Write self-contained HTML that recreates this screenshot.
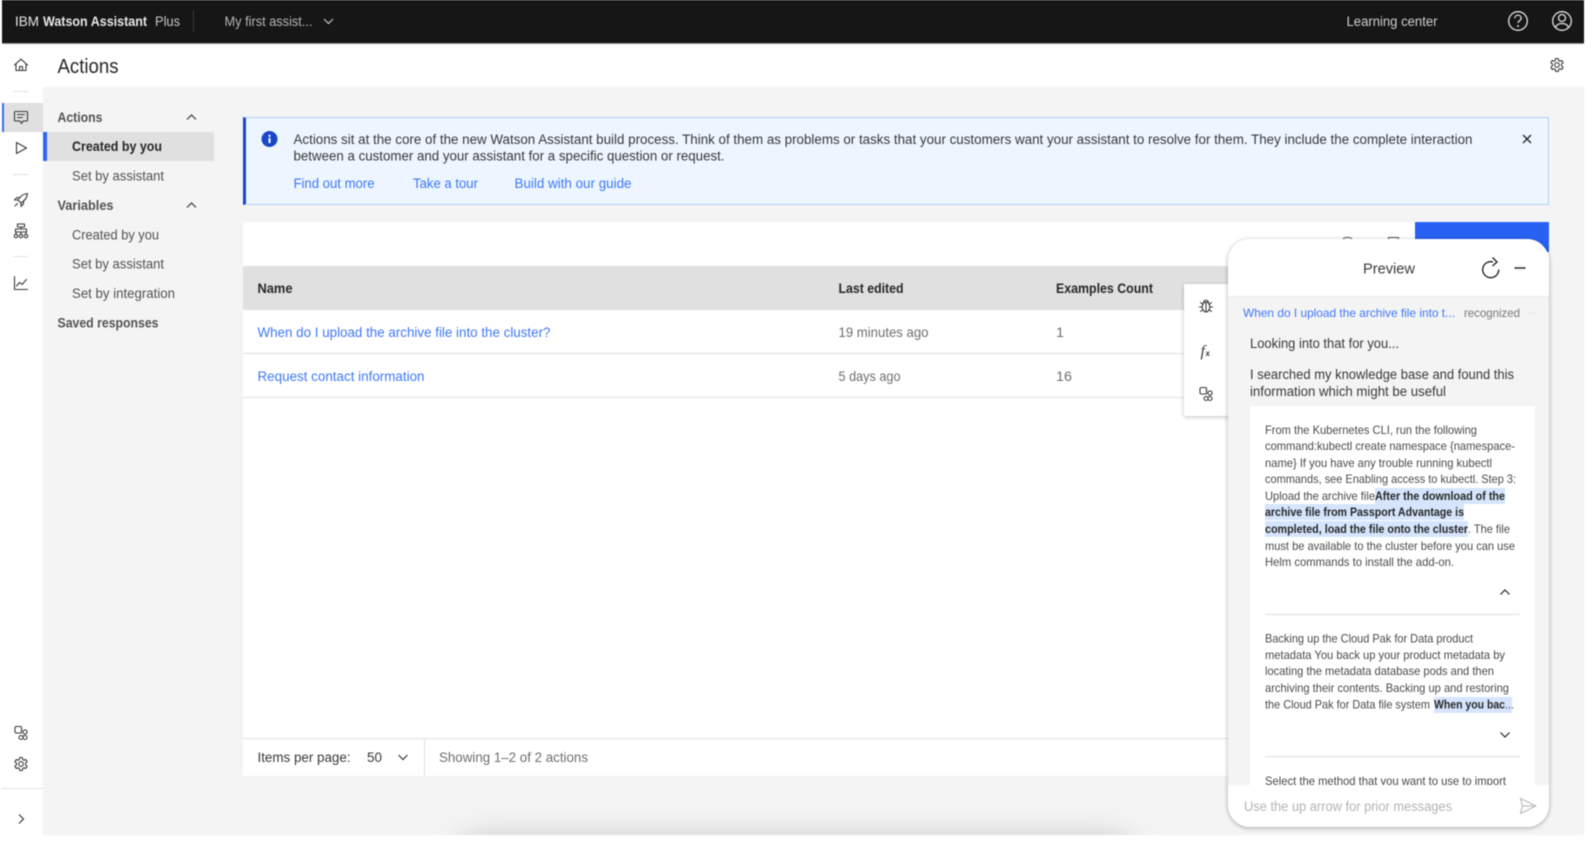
<!DOCTYPE html>
<html><head><meta charset="utf-8"><title>Actions</title>
<style>
html,body{margin:0;padding:0;background:#fff;width:1594px;height:842px;overflow:hidden}
.b{position:absolute}
#wrap{position:absolute;left:0;top:0;width:1594px;height:842px;overflow:hidden;filter:blur(.4px)}
svg text{font-family:"Liberation Sans",Arial,sans-serif;font-size:13.5px;fill:#525252;white-space:pre}
.w{fill:#e8e8e8}.g{fill:#bdbdbd}
.d{fill:#393939}.h{font-weight:700;fill:#393939}
.k{font-weight:700;fill:#262626}
.l{fill:#3f78f6}
.c{font-size:12px;fill:#4a4a4a}
.cb{font-size:12px;font-weight:700;fill:#262626}
.i{fill:none;stroke:#393939;stroke-width:1.1;stroke-linejoin:round;stroke-linecap:round}
</style></head><body>
<div id="wrap">
<div class="b" style="left:2px;top:0;width:1582px;height:44px;background:#161616;border-bottom:1px solid #8d8d8d;box-sizing:border-box"></div>
<div class="b" style="left:193px;top:10px;width:1px;height:22px;background:#393939"></div>
<div class="b" style="left:2px;top:44px;width:1582px;height:43px;background:#fff"></div>
<div class="b" style="left:43px;top:87px;width:1541px;height:748px;background:#f4f4f4;overflow:hidden">
  <div class="b" style="left:415px;top:750px;width:675px;height:40px;background:rgba(0,0,0,.18);border-radius:20px;filter:blur(15px)"></div>
</div>
<!-- rail -->
<div class="b" style="left:13px;top:91px;width:15px;height:1px;background:#e0e0e0"></div>
<div class="b" style="left:2px;top:103px;width:41px;height:29px;background:#e0e0e0"></div>
<div class="b" style="left:2px;top:103px;width:2px;height:29px;background:#3b6ff0"></div>
<div class="b" style="left:13px;top:174px;width:15px;height:1px;background:#e0e0e0"></div>
<div class="b" style="left:13px;top:256px;width:15px;height:1px;background:#e0e0e0"></div>
<div class="b" style="left:2px;top:788px;width:41px;height:1px;background:#e0e0e0"></div>
<!-- side nav -->
<div class="b" style="left:43px;top:132px;width:171px;height:29px;background:#e0e0e0"></div>
<div class="b" style="left:43px;top:132px;width:4px;height:29px;background:#2f66f2"></div>
<!-- banner -->
<div class="b" style="left:243px;top:117px;width:1306px;height:88px;background:#edf5ff;border:1px solid #b6cdf6;border-left:3px solid #1a47c8;box-sizing:border-box"></div>
<!-- table -->
<div class="b" style="left:243px;top:222px;width:1306px;height:554px;background:#fff"></div>
<div class="b" style="left:1415px;top:222px;width:134px;height:30px;background:#2962f2"></div>
<div class="b" style="left:1342px;top:237px;width:11px;height:8px;border:1px solid #555;border-radius:6px;box-sizing:border-box"></div>
<div class="b" style="left:1388px;top:237px;width:11px;height:8px;border:1px solid #555;box-sizing:border-box"></div>
<div class="b" style="left:243px;top:266px;width:1306px;height:44px;background:#e0e0e0"></div>
<div class="b" style="left:243px;top:353px;width:1000px;height:1px;background:#e0e0e0"></div>
<div class="b" style="left:243px;top:397px;width:1000px;height:1px;background:#e0e0e0"></div>
<div class="b" style="left:243px;top:738px;width:1000px;height:1px;background:#e0e0e0"></div>
<div class="b" style="left:424px;top:738px;width:1px;height:38px;background:#e0e0e0"></div>
<!-- float tools -->
<div class="b" style="left:1184px;top:284px;width:48px;height:132px;background:#fff;box-shadow:0 1px 4px rgba(0,0,0,.25)"></div>
<!-- preview -->
<div class="b" style="left:1228px;top:239px;width:321px;height:588px;background:#f4f4f4;border-radius:22px;box-shadow:0 1px 5px rgba(0,0,0,.32);overflow:hidden">
  <div class="b" style="left:0;top:0;width:321px;height:58px;background:#fff;border-bottom:1px solid #e8e8e8;box-sizing:border-box"></div>
  <div class="b" style="left:22px;top:167px;width:285px;height:379px;background:#fff"></div>
  <div class="b" style="left:0;top:546px;width:321px;height:42px;background:#fff"></div>
  <div class="b" style="left:37px;top:375px;width:255px;height:1px;background:#e0e0e0"></div>
  <div class="b" style="left:37px;top:517px;width:255px;height:1px;background:#e0e0e0"></div>
  <div class="b" style="left:147px;top:249px;width:130px;height:16px;background:#d6e5fd"></div>
  <div class="b" style="left:37px;top:265px;width:199px;height:16px;background:#d6e5fd"></div>
  <div class="b" style="left:37px;top:282px;width:203px;height:16px;background:#d6e5fd"></div>
  <div class="b" style="left:206px;top:458px;width:78px;height:16px;background:#d6e5fd"></div>
</div>

<svg class="b" style="left:0;top:0" width="1594" height="842" viewBox="0 0 1594 842" xmlns="http://www.w3.org/2000/svg">
<defs>
<clipPath id="cp"><rect x="1228" y="700" width="321" height="85"/></clipPath>
<g id="gear"><path d="M6.7 1.5h2.6l.4 2 1.2.7 1.9-.7 1.3 2.2-1.5 1.3v2l1.500 1.3-1.3 2.2-1.9-.7-1.2.7-.4 2H6.7l-.4-2-1.2-.7-1.9.7-1.3-2.2 1.5-1.3V7L1.9 5.7l1.3-2.2 1.9.7 1.2-.7z"/><circle cx="8" cy="8" r="2.3"/></g>
<g id="apps"><rect x="2" y="1.5" width="6.5" height="6.5" rx="1.2"/><circle cx="12" cy="7" r="2.1"/><circle cx="8" cy="12.5" r="2"/><circle cx="12" cy="12.5" r="2"/></g>
</defs>

<!-- topbar text -->
<text x="15" y="26" textLength="24" lengthAdjust="spacingAndGlyphs" class="w">IBM</text>
<text x="43" y="26" textLength="104" lengthAdjust="spacingAndGlyphs" class="w" style="font-weight:700">Watson Assistant</text>
<text x="155" y="26" textLength="25" lengthAdjust="spacingAndGlyphs" style="fill:#c6c6c6">Plus</text>
<text x="224.500" y="26" textLength="88" lengthAdjust="spacingAndGlyphs" style="fill:#b5b5b5">My first assist...</text>
<path d="M324 19l4.500 4.500 4.500-4.500" fill="none" stroke="#c6c6c6" stroke-width="1.200"/>
<text x="1346.500" y="26" textLength="91" lengthAdjust="spacingAndGlyphs" style="fill:#cfcfcf">Learning center</text>
<circle cx="1518" cy="21" r="9.300" fill="none" stroke="#e0e0e0" stroke-width="1.300"/>
<path d="M1514.800 18.300c0-4.200 6.400-4.200 6.400 0 0 2.400-3.200 2.200-3.200 4.700" fill="none" stroke="#e0e0e0" stroke-width="1.300"/><circle cx="1518" cy="26" r="1" fill="#e0e0e0"/>
<circle cx="1562" cy="21" r="9.300" fill="none" stroke="#e0e0e0" stroke-width="1.300"/>
<circle cx="1562" cy="18" r="3.500" fill="none" stroke="#e0e0e0" stroke-width="1.300"/>
<path d="M1555.500 27.500c1-3 3.500-4 6.500-4s5.500 1 6.500 4" fill="none" stroke="#e0e0e0" stroke-width="1.300"/>

<!-- title -->
<text x="57.500" y="73" textLength="61" lengthAdjust="spacingAndGlyphs" style="font-size:20px;fill:#262626">Actions</text>
<use href="#gear" x="1549" y="57" class="i"/>

<!-- rail icons -->
<g transform="translate(13,57)" class="i"><path d="M1.500 8L8 2.200 14.500 8M3 7v6.500h10V7M6.500 13.500v-4h3v4"/></g>
<g transform="translate(13,109)" class="i"><path d="M2.500 2.500h11a1 1 0 0 1 1 1v7.500a1 1 0 0 1-1 1H10l-1.500 2.500L7 12H2.500a1 1 0 0 1-1-1V3.500a1 1 0 0 1 1-1zM4.500 5.500h7M4.500 8.500h5"/></g>
<g transform="translate(13,140)" class="i"><path d="M3.500 2.500v11l10-5.500z"/></g>
<g transform="translate(13,192)" class="i"><path d="M14.500 1.500C10.500 2 7 4.500 5 8l3 3c3.500-2 6-5.500 6.500-9.500zM5 8H1.500l2.500-2.500h3.500M8 11v3.500l2.500-2.500V8.500M2 14l2.500-2.500"/></g>
<g transform="translate(13,223)" class="i"><rect x="4.500" y="1" width="7" height="3"/><rect x="2.500" y="6" width="11" height="3"/><path d="M8 4v2M3 9v2M8 9v2M13 9v2"/><circle cx="3" cy="13" r="1.700"/><circle cx="8" cy="13" r="1.700"/><circle cx="13" cy="13" r="1.700"/></g>
<g transform="translate(13,275)" class="i"><path d="M1.500 1.500v13h13M3.500 11l3-3.500 2.500 2 4.500-5"/></g>
<use href="#apps" x="13" y="725" class="i"/>
<use href="#gear" x="13" y="756" class="i"/>
<path d="M19 814.500l4.500 4.500-4.500 4.500" fill="none" stroke="#393939" stroke-width="1.200"/>

<!-- side nav -->
<text x="57.500" y="122" textLength="45" lengthAdjust="spacingAndGlyphs" class="h" style="fill:#525252">Actions</text>
<path d="M187 119.500l4.500-4.500 4.500 4.500" fill="none" stroke="#393939" stroke-width="1.200"/>
<text x="72" y="151" textLength="90" lengthAdjust="spacingAndGlyphs" class="k">Created by you</text>
<text x="72" y="180.500" textLength="92" lengthAdjust="spacingAndGlyphs">Set by assistant</text>
<text x="57.500" y="210" textLength="56" lengthAdjust="spacingAndGlyphs" class="h" style="fill:#525252">Variables</text>
<path d="M187 207.500l4.500-4.500 4.500 4.500" fill="none" stroke="#393939" stroke-width="1.200"/>
<text x="72" y="239.500" textLength="87" lengthAdjust="spacingAndGlyphs">Created by you</text>
<text x="72" y="268.500" textLength="92" lengthAdjust="spacingAndGlyphs">Set by assistant</text>
<text x="72" y="298" textLength="103" lengthAdjust="spacingAndGlyphs">Set by integration</text>
<text x="57.500" y="327.500" textLength="101" lengthAdjust="spacingAndGlyphs" class="h" style="fill:#525252">Saved responses</text>

<!-- banner -->
<circle cx="269.500" cy="139" r="8" fill="#1a47c8"/>
<rect x="268.500" y="138" width="2" height="5" fill="#fff"/><rect x="268.500" y="134.800" width="2" height="2" fill="#fff"/>
<text x="293.500" y="144" textLength="1179" lengthAdjust="spacingAndGlyphs" class="d">Actions sit at the core of the new Watson Assistant build process. Think of them as problems or tasks that your customers want your assistant to resolve for them. They include the complete interaction</text>
<text x="293.500" y="160.500" textLength="431" lengthAdjust="spacingAndGlyphs" class="d">between a customer and your assistant for a specific question or request.</text>
<text x="293.500" y="188" textLength="81" lengthAdjust="spacingAndGlyphs" class="l">Find out more</text>
<text x="413" y="188" textLength="65" lengthAdjust="spacingAndGlyphs" class="l">Take a tour</text>
<text x="514.500" y="188" textLength="117" lengthAdjust="spacingAndGlyphs" class="l">Build with our guide</text>
<path d="M1523 135l8 8M1531 135l-8 8" stroke="#262626" stroke-width="1.300"/>

<!-- table -->
<text x="257.500" y="293" textLength="35" lengthAdjust="spacingAndGlyphs" class="k">Name</text>
<text x="838.500" y="293" textLength="65" lengthAdjust="spacingAndGlyphs" class="k">Last edited</text>
<text x="1056" y="293" textLength="97" lengthAdjust="spacingAndGlyphs" class="k">Examples Count</text>
<text x="257.500" y="337" textLength="293" lengthAdjust="spacingAndGlyphs" class="l">When do I upload the archive file into the cluster?</text>
<text x="838.500" y="337" textLength="90" lengthAdjust="spacingAndGlyphs" style="fill:#6f6f6f">19 minutes ago</text>
<text x="1056" y="337" textLength="8" lengthAdjust="spacingAndGlyphs" style="fill:#6f6f6f">1</text>
<text x="257.500" y="381" textLength="167" lengthAdjust="spacingAndGlyphs" class="l">Request contact information</text>
<text x="838.500" y="381" textLength="62" lengthAdjust="spacingAndGlyphs" style="fill:#6f6f6f">5 days ago</text>
<text x="1056" y="381" textLength="16" lengthAdjust="spacingAndGlyphs" style="fill:#6f6f6f">16</text>
<text x="257.500" y="762" textLength="93" lengthAdjust="spacingAndGlyphs" class="d">Items per page:</text>
<text x="367" y="762" textLength="15" lengthAdjust="spacingAndGlyphs" class="d">50</text>
<path d="M398.500 755l4.500 4.500 4.500-4.500" fill="none" stroke="#393939" stroke-width="1.200"/>
<text x="439" y="762" textLength="149" lengthAdjust="spacingAndGlyphs" style="fill:#6f6f6f">Showing 1–2 of 2 actions</text>

<!-- float tools -->
<g transform="translate(1198,298)" class="i"><ellipse cx="8" cy="9" rx="3.800" ry="5"/><path d="M5.500 4.500c.5-3 4.500-3 5 0M8 4v10M4 9H1.500M14.500 9H12M2.500 4.500L5 6.500M13.500 4.500L11 6.500M2.500 13.500L5 11.500M13.500 13.500L11 11.500"/></g>
<text x="1200.500" y="356" style="font-family:'Liberation Serif',serif;font-style:italic;font-size:16px;fill:#393939">f</text>
<text x="1205.500" y="356" style="font-size:8px;fill:#393939;font-weight:700">x</text>
<use href="#apps" x="1198" y="386" class="i"/>

<!-- preview -->
<text x="1363" y="273.500" textLength="52" lengthAdjust="spacingAndGlyphs" style="font-size:15px;fill:#393939">Preview</text>
<path d="M1493 262A8 8 0 1 0 1498.700 269.500" fill="none" stroke="#262626" stroke-width="1.400"/>
<path d="M1492.500 257.500l4.500 4.500-4.500 4" fill="none" stroke="#262626" stroke-width="1.400"/>
<path d="M1514.500 268h11" stroke="#262626" stroke-width="1.500"/>
<text x="1243" y="317" textLength="212" lengthAdjust="spacingAndGlyphs" class="c" style="fill:#3f78f6">When do I upload the archive file into t...</text>
<text x="1464" y="317" textLength="56" lengthAdjust="spacingAndGlyphs" class="c" style="fill:#777">recognized</text>
<path d="M1529 313h6" stroke="#e6e6e6" stroke-width="1"/>
<text x="1250" y="348" textLength="149" lengthAdjust="spacingAndGlyphs" class="d">Looking into that for you...</text>
<text x="1250" y="379" textLength="264" lengthAdjust="spacingAndGlyphs" class="d">I searched my knowledge base and found this</text>
<text x="1250" y="396" textLength="196" lengthAdjust="spacingAndGlyphs" class="d">information which might be useful</text>

<text x="1265" y="434" textLength="212" lengthAdjust="spacingAndGlyphs" class="c">From the Kubernetes CLI, run the following</text>
<text x="1265" y="450" textLength="250" lengthAdjust="spacingAndGlyphs" class="c">command:kubectl create namespace {namespace-</text>
<text x="1265" y="467" textLength="227" lengthAdjust="spacingAndGlyphs" class="c">name} If you have any trouble running kubectl</text>
<text x="1265" y="483" textLength="251" lengthAdjust="spacingAndGlyphs" class="c">commands, see Enabling access to kubectl. Step 3:</text>
<text x="1265" y="500" textLength="110" lengthAdjust="spacingAndGlyphs" class="c">Upload the archive file</text>
<text x="1375" y="500" textLength="130" lengthAdjust="spacingAndGlyphs" class="cb">After the download of the</text>
<text x="1265" y="516" textLength="199" lengthAdjust="spacingAndGlyphs" class="cb">archive file from Passport Advantage is</text>
<text x="1265" y="533" textLength="203" lengthAdjust="spacingAndGlyphs" class="cb">completed, load the file onto the cluster</text>
<text x="1468" y="533" textLength="42" lengthAdjust="spacingAndGlyphs" class="c">. The file</text>
<text x="1265" y="550" textLength="250" lengthAdjust="spacingAndGlyphs" class="c">must be available to the cluster before you can use</text>
<text x="1265" y="566" textLength="189" lengthAdjust="spacingAndGlyphs" class="c">Helm commands to install the add-on.</text>
<path d="M1500.500 594.500l4.500-4.500 4.500 4.500" fill="none" stroke="#262626" stroke-width="1.200"/>

<text x="1265" y="642.500" textLength="208" lengthAdjust="spacingAndGlyphs" class="c">Backing up the Cloud Pak for Data product</text>
<text x="1265" y="659" textLength="240" lengthAdjust="spacingAndGlyphs" class="c">metadata You back up your product metadata by</text>
<text x="1265" y="675" textLength="229" lengthAdjust="spacingAndGlyphs" class="c">locating the metadata database pods and then</text>
<text x="1265" y="692" textLength="244" lengthAdjust="spacingAndGlyphs" class="c">archiving their contents. Backing up and restoring</text>
<text x="1265" y="708.500" textLength="165" lengthAdjust="spacingAndGlyphs" class="c">the Cloud Pak for Data file system</text>
<text x="1434" y="708.500" textLength="71" lengthAdjust="spacingAndGlyphs" class="cb">When you bac</text>
<text x="1505" y="708.500" textLength="9" lengthAdjust="spacingAndGlyphs" class="c">...</text>
<path d="M1500.500 732.500l4.500 4.500 4.500-4.500" fill="none" stroke="#262626" stroke-width="1.200"/>
<text x="1265" y="785" textLength="241" lengthAdjust="spacingAndGlyphs" class="c" clip-path="url(#cp)">Select the method that you want to use to import</text>

<text x="1244" y="811" textLength="208" lengthAdjust="spacingAndGlyphs" style="fill:#b4b4b4">Use the up arrow for prior messages</text>
<path d="M1520.500 798.500l15.500 7.500-15.500 7.500 2-7.500z" fill="none" stroke="#bdbdbd" stroke-width="1.200" stroke-linejoin="round"/>
<path d="M1522.500 806H1536" fill="none" stroke="#bdbdbd" stroke-width="1.200"/>
</svg>
</div>
</body></html>
